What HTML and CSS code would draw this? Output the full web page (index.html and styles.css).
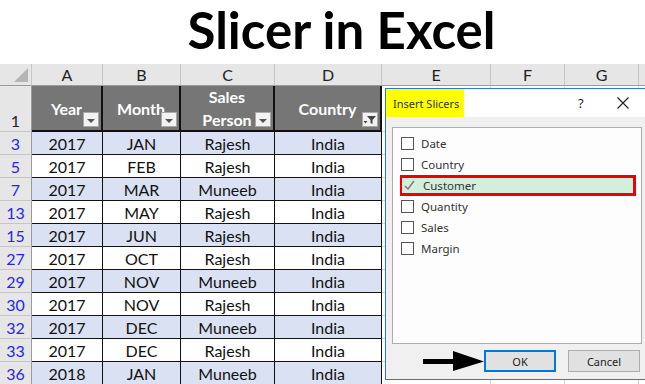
FILE: index.html
```html
<!DOCTYPE html>
<html>

<head>
  <link rel="stylesheet" href="styles.css">
</head>

<body>
  <h1 class="title">Slicer in Excel</h1>

  <div class="sheet">
    <!-- column letters -->
    <div class="col-head corner"><span class="corner-tri"></span></div>
    <div class="col-head">A</div>
    <div class="col-head">B</div>
    <div class="col-head">C</div>
    <div class="col-head">D</div>
    <div class="col-head">E</div>
    <div class="col-head">F</div>
    <div class="col-head">G</div>
    <div class="col-head"></div>

    <!-- table header row -->
    <div class="row-num row-first">1</div>
    <div class="th">Year<span class="filter-btn"><span class="down"></span></span></div>
    <div class="th">Month<span class="filter-btn"><span class="down"></span></span></div>
    <div class="th">Sales<br>Person<span class="filter-btn"><span class="down"></span></span></div>
    <div class="th">Country<span class="filter-btn">
        <svg width="14" height="12" viewBox="0 0 14 12">
          <path d="M4 2h9l-3.5 4v4l-2-1v-3z" fill="#444" />
          <path d="M0.5 7h4l-2 2.5z" fill="#444" />
        </svg>
      </span></div>
    <div class="cell"></div>
    <div class="cell"></div>
    <div class="cell"></div>
    <div class="cell"></div>
  </div>

  <div class="dialog">
    <div class="dialog-title">
      <span class="dialog-name">Insert Slicers</span>
      <span class="dialog-help">?</span>
      <svg class="dialog-close" width="12" height="12" viewBox="0 0 12 12">
        <path d="M0.5 0.5l11 11M11.5 0.5l-11 11" stroke="#222" stroke-width="1.2" />
      </svg>
    </div>
    <div class="dialog-body">
      <div class="field-list">
        <label class="field"><span class="check"></span>Date</label>
        <label class="field"><span class="check"></span>Country</label>
        <label class="field field-picked">
          <span class="check check-on">
            <svg width="13" height="13" viewBox="0 0 13 13">
              <path d="M2 7l3 3 6-8" fill="none" stroke="#777" stroke-width="1.4" />
            </svg>
          </span>Customer
        </label>
        <label class="field"><span class="check"></span>Quantity</label>
        <label class="field"><span class="check"></span>Sales</label>
        <label class="field"><span class="check"></span>Margin</label>
      </div>
      <div class="dialog-buttons">
        <svg class="arrow" width="61" height="22" viewBox="0 0 61 22">
          <path d="M0 9h32v5H0z" fill="#000" />
          <path d="M30 1L61 11.5 30 21z" fill="#000" />
        </svg>
        <button class="btn btn-default">OK</button>
        <button class="btn">Cancel</button>
      </div>
    </div>
  </div>

  <script>
    const rows = [
      [3, '2017', 'JAN', 'Rajesh'],
      [5, '2017', 'FEB', 'Rajesh'],
      [7, '2017', 'MAR', 'Muneeb'],
      [13, '2017', 'MAY', 'Rajesh'],
      [15, '2017', 'JUN', 'Rajesh'],
      [27, '2017', 'OCT', 'Rajesh'],
      [29, '2017', 'NOV', 'Muneeb'],
      [30, '2017', 'NOV', 'Rajesh'],
      [32, '2017', 'DEC', 'Muneeb'],
      [33, '2017', 'DEC', 'Rajesh'],
      [36, '2018', 'JAN', 'Muneeb']
    ];

    const sheet = document.querySelector('.sheet');

    rows.forEach((row, i) => {
      const band = i % 2 === 0 ? 'band' : '';
      let html = `<div class="row-num">${row[0]}</div>`;
      html += `<div class="td ${band}">${row[1]}</div>`;
      html += `<div class="td ${band}">${row[2]}</div>`;
      html += `<div class="td ${band}">${row[3]}</div>`;
      html += `<div class="td ${band}">India</div>`;
      html += '<div class="cell"></div><div class="cell"></div><div class="cell"></div><div class="cell"></div>';
      sheet.insertAdjacentHTML('beforeend', html);
    });
  </script>
</body>

</html>
```

FILE: styles.css
```css
body {
  margin: 0;
  width: 645px;
  height: 384px;
  overflow: hidden;
  position: relative;
  background: #ffffff;
  font-family: Lato, "Liberation Sans", sans-serif;
}

.title {
  margin: 0;
  height: 64px;
  line-height: 60px;
  padding-left: 38px;
  text-align: center;
  font-family: Lato, sans-serif;
  font-weight: 700;
  font-size: 51px;
  color: #000000;
  white-space: nowrap;
}

.sheet {
  display: grid;
  grid-template-columns: 32px 71px 78px 94px 107px 109px 74px 74px 10px;
  grid-template-rows: 22px 46px repeat(11, 23px);
  font-size: 16px;
}

.col-head {
  box-sizing: border-box;
  background: #e6e6e6;
  border-right: 1px solid #c6c6c6;
  border-bottom: 1px solid #9b9b9b;
  display: flex;
  align-items: center;
  justify-content: center;
  color: #222222;
  font-size: 16px;
}

.corner {
  position: relative;
}

.corner-tri {
  position: absolute;
  right: 3px;
  bottom: 3px;
  width: 0;
  height: 0;
  border-left: 14px solid transparent;
  border-bottom: 14px solid #b5b5b5;
}

.row-num {
  box-sizing: border-box;
  background: #e6e6e6;
  border-right: 1px solid #9b9b9b;
  border-bottom: 1px solid #c6c6c6;
  display: flex;
  align-items: center;
  justify-content: center;
  color: #2626e6;
  font-size: 16px;
}

.row-first {
  align-items: flex-end;
  padding-bottom: 1px;
  color: #222222;
}

.th {
  box-sizing: border-box;
  position: relative;
  background: #767676;
  border-right: 2px solid #111111;
  border-bottom: 2px solid #111111;
  color: #ffffff;
  font-weight: 700;
  line-height: 23px;
  display: flex;
  align-items: center;
  justify-content: center;
  text-align: center;
}

.filter-btn {
  position: absolute;
  right: 2px;
  bottom: 3px;
  width: 16px;
  height: 15px;
  box-sizing: border-box;
  background: #f2f2f2;
  border: 1px solid #a8a8a8;
  display: flex;
  align-items: center;
  justify-content: center;
}

.down {
  width: 0;
  height: 0;
  border-left: 4px solid transparent;
  border-right: 4px solid transparent;
  border-top: 4px solid #555555;
  margin-top: 2px;
}

.td {
  box-sizing: border-box;
  border-right: 1px solid #111111;
  border-bottom: 1px solid #111111;
  background: #ffffff;
  display: flex;
  align-items: center;
  justify-content: center;
  color: #111111;
}

.td.band {
  background: #d9e1f2;
}

.cell {
  box-sizing: border-box;
  border-right: 1px solid #d4d4d4;
  border-bottom: 1px solid #d4d4d4;
}

.dialog {
  position: absolute;
  left: 385px;
  top: 88px;
  width: 264px;
  height: 292px;
  box-sizing: border-box;
  border: 1px solid #2b79d0;
  background: #f0f0f0;
  display: flex;
  flex-direction: column;
  font-family: "Noto Sans", "Open Sans", sans-serif;
  font-size: 11px;
  color: #222222;
}

.dialog-title {
  height: 28px;
  background: #ffffff;
  display: flex;
  align-items: center;
  flex-shrink: 0;
}

.dialog-name {
  background: #ffff00;
  height: 28px;
  width: 78px;
  box-sizing: border-box;
  padding-left: 7px;
  display: flex;
  align-items: center;
  font-size: 11px;
  color: #333333;
  white-space: nowrap;
  flex-shrink: 0;
}

.dialog-help {
  margin-left: 114px;
  font-size: 13px;
}

.dialog-close {
  margin-left: 33px;
}

.dialog-body {
  flex: 1;
  display: flex;
  flex-direction: column;
  padding: 10px 5px 0 6px;
}

.field-list {
  height: 217px;
  box-sizing: border-box;
  background: #fdfdfd;
  border: 1px solid #adadad;
  padding: 5px 4px 0 8px;
  width: 250px;
}

.field {
  height: 21px;
  display: flex;
  align-items: center;
  gap: 7px;
  color: #333333;
  font-size: 11.5px;
}

.check {
  width: 13px;
  height: 13px;
  box-sizing: border-box;
  border: 1px solid #555555;
  background: #ffffff;
  flex-shrink: 0;
}

.check-on {
  border: none;
  background: transparent;
}

.field-picked {
  margin-left: -1px;
  padding-left: 1px;
  width: 236px;
  box-sizing: border-box;
  border: 3px solid #ee0000;
  border-left-width: 2px;
  background: #d4eedd;
}

.dialog-buttons {
  display: flex;
  align-items: center;
  height: 22px;
  margin-top: 6px;
  padding-left: 31px;
}

.arrow {
  flex-shrink: 0;
}

.btn {
  height: 22px;
  width: 72px;
  box-sizing: border-box;
  background: #e1e1e1;
  border: 1px solid #adadad;
  font-family: "Noto Sans", "Open Sans", sans-serif;
  font-size: 11px;
  color: #222222;
  padding: 0;
}

.btn-default {
  border: 2px solid #0078d7;
  margin-right: 12px;
}
```
